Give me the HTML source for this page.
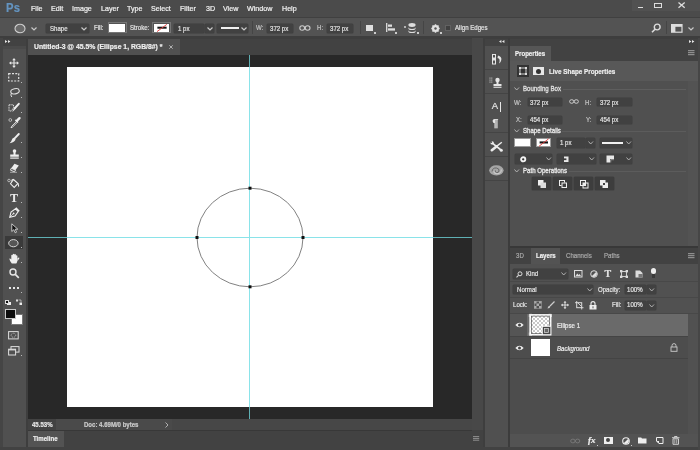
<!DOCTYPE html>
<html><head><meta charset="utf-8"><title>Photoshop</title>
<style>
*{margin:0;padding:0;box-sizing:border-box}
html,body{width:700px;height:450px;overflow:hidden;background:#535353}
body{position:relative;filter:blur(0.4px);font-family:"Liberation Sans",sans-serif;font-size:7px;color:#e4e4e4;line-height:1;-webkit-text-stroke:0.2px}
.a{position:absolute}
.t{position:absolute;white-space:nowrap;line-height:10px;height:10px;transform:scaleX(.87);transform-origin:0 50%}
.m{transform:scaleX(.95)}
.b{font-weight:bold}
.box{position:absolute;background:#414141;border-radius:1px;box-shadow:0 0 0 0.5px #3e3e3e}
svg{position:absolute;overflow:visible}
</style></head><body>

<!-- ===== menu bar ===== -->
<div class="a" id="menubar" style="left:0;top:0;width:700px;height:16.5px;background:#4b4b4b"></div>
<div class="t b" style="transform:scaleX(.9);left:6.3px;top:-0.3px;font-size:12.5px;line-height:17px;height:17px;color:#6494c0;letter-spacing:0.2px">Ps</div>
<div class="t m" style="left:31px;top:4.4px;font-size:7.5px;color:#f2f2f2;-webkit-text-stroke:0.2px">File</div>
<div class="t m" style="left:51px;top:4.4px;font-size:7.5px;color:#f2f2f2;-webkit-text-stroke:0.2px">Edit</div>
<div class="t m" style="left:72px;top:4.4px;font-size:7.5px;color:#f2f2f2;-webkit-text-stroke:0.2px">Image</div>
<div class="t m" style="left:101px;top:4.4px;font-size:7.5px;color:#f2f2f2;-webkit-text-stroke:0.2px">Layer</div>
<div class="t m" style="left:127px;top:4.4px;font-size:7.5px;color:#f2f2f2;-webkit-text-stroke:0.2px">Type</div>
<div class="t m" style="left:151px;top:4.4px;font-size:7.5px;color:#f2f2f2;-webkit-text-stroke:0.2px">Select</div>
<div class="t m" style="left:180px;top:4.4px;font-size:7.5px;color:#f2f2f2;-webkit-text-stroke:0.2px">Filter</div>
<div class="t m" style="left:206px;top:4.4px;font-size:7.5px;color:#f2f2f2;-webkit-text-stroke:0.2px">3D</div>
<div class="t m" style="left:223px;top:4.4px;font-size:7.5px;color:#f2f2f2;-webkit-text-stroke:0.2px">View</div>
<div class="t m" style="left:247px;top:4.4px;font-size:7.5px;color:#f2f2f2;-webkit-text-stroke:0.2px">Window</div>
<div class="t m" style="left:282px;top:4.4px;font-size:7.5px;color:#f2f2f2;-webkit-text-stroke:0.2px">Help</div>
<!-- window controls -->
<div class="a" style="left:632px;top:0;width:68px;height:11px;background:#515151"></div>
<div class="a" style="left:637.8px;top:6.6px;width:5.6px;height:1.4px;background:#ddd"></div>
<div class="a" style="left:654.4px;top:3.2px;width:7.2px;height:4.8px;border:1.2px solid #ddd;border-top-width:1.6px"></div>
<svg style="left:677.8px;top:2.3px" width="7.2" height="6.2"><path d="M0.5 0.500 L6.700 5.700 M6.700 0.500 L0.500 5.700" stroke="#ddd" stroke-width="1.3" fill="none"/></svg>

<!-- ===== options bar ===== -->
<div class="a" style="left:0;top:16.5px;width:700px;height:1.5px;background:#404040"></div>
<div class="a" id="optbar" style="left:0;top:18px;width:700px;height:18px;background:#535353"></div>
<div class="a" style="left:0;top:36px;width:700px;height:3px;background:#3e3e3e"></div>

<svg style="left:14px;top:23px" width="12" height="11"><ellipse cx="6" cy="5.5" rx="5" ry="4.3" fill="#6a6a6a" stroke="#cfcfcf" stroke-width="1.1"/></svg>
<svg style="left:31px;top:27px" width="6" height="4"><path d="M0.5 0.5 L3 3 L5.5 0.5" stroke="#c8c8c8" stroke-width="1.2" fill="none"/></svg>

<div class="box" style="left:46px;top:23.5px;width:43px;height:9.5px"></div>
<div class="t" style="left:50px;top:23.5px">Shape</div>
<svg style="left:81px;top:27px" width="6" height="4"><path d="M0.5 0.5 L3 3 L5.5 0.5" stroke="#c8c8c8" stroke-width="1.2" fill="none"/></svg>

<div class="t" style="left:94px;top:23px">Fill:</div>
<div class="a" style="left:107.5px;top:22.3px;width:19px;height:10.7px;border:0.8px solid #767676"></div><div class="a" style="left:109.3px;top:23.8px;width:15.4px;height:8px;background:#fff"></div>
<div class="t" style="left:130px;top:23px">Stroke:</div>
<div class="a" style="left:152.2px;top:22.3px;width:19px;height:10.7px;border:0.8px solid #767676"></div><div class="a" style="left:154.3px;top:23.8px;width:15.2px;height:8px;background:#fff"></div>
<svg style="left:154.3px;top:23.8px" width="15.2" height="8"><rect x="3.4" y="2.7" width="9.2" height="2" fill="#151515"/><path d="M3 7.6 L12.8 0.4" stroke="#e23a3a" stroke-width="0.9"/></svg>

<div class="box" style="left:174px;top:23.5px;width:30px;height:9.5px"></div>
<div class="t" style="left:178px;top:23.5px">1 px</div>
<div class="box" style="left:205px;top:23.5px;width:9px;height:9.5px"></div>
<svg style="left:207px;top:27px" width="6" height="4"><path d="M0.5 0.5 L3 3 L5.5 0.5" stroke="#c8c8c8" stroke-width="1.2" fill="none"/></svg>

<div class="box" style="left:217px;top:23.5px;width:31px;height:9.5px"></div>
<div class="a" style="left:220.5px;top:27px;width:18.5px;height:2px;background:#f0f0f0"></div>
<svg style="left:241px;top:27px" width="6" height="4"><path d="M0.5 0.5 L3 3 L5.5 0.5" stroke="#c8c8c8" stroke-width="1.2" fill="none"/></svg>

<div class="a" style="left:252px;top:21px;width:1px;height:13px;background:#454545"></div>
<div class="t" style="left:256px;top:23px;color:#c4c4c4">W:</div>
<div class="box" style="left:267px;top:23.5px;width:26px;height:9.5px"></div>
<div class="t" style="left:270px;top:23.5px">372 px</div>
<svg style="left:299px;top:25px" width="12" height="6"><ellipse cx="3.2" cy="3" rx="2.4" ry="2.2" fill="none" stroke="#ccc" stroke-width="1.1"/><ellipse cx="8.6" cy="3" rx="2.4" ry="2.2" fill="none" stroke="#ccc" stroke-width="1.1"/></svg>
<div class="t" style="left:317px;top:23px;color:#c4c4c4">H:</div>
<div class="box" style="left:327px;top:23.5px;width:26px;height:9.5px"></div>
<div class="t" style="left:330px;top:23.5px">372 px</div>
<div class="a" style="left:360px;top:21px;width:1px;height:13px;background:#454545"></div>

<!-- path ops icons -->
<div class="a" style="left:366px;top:25px;width:7px;height:6px;background:#e0e0e0"></div>
<div class="a" style="left:374px;top:32px;width:1.5px;height:1.5px;background:#ccc"></div>
<svg style="left:386px;top:23px" width="10" height="10"><path d="M0.7 0 V9" stroke="#ddd" stroke-width="1.3"/><rect x="2" y="1.5" width="4" height="2.3" fill="#ddd"/><rect x="2" y="5.3" width="7" height="2.3" fill="#ddd"/></svg>
<div class="a" style="left:395px;top:32px;width:1.5px;height:1.5px;background:#ccc"></div>
<svg style="left:404px;top:22px" width="14" height="12"><path d="M0 5 h2 M1 4 v2" stroke="#ddd" stroke-width="0.9"/><ellipse cx="8" cy="3" rx="3.6" ry="1.9" fill="#ddd"/><path d="M4.4 5 v1.2 a3.6 1.9 0 0 0 7.2 0 V5 a3.6 1.9 0 0 1 -7.2 0z" fill="#ddd"/><path d="M4.4 8 v1.2 a3.6 1.9 0 0 0 7.2 0 V8 a3.6 1.9 0 0 1 -7.2 0z" fill="#ddd"/></svg>
<div class="a" style="left:417px;top:32px;width:1.5px;height:1.5px;background:#ccc"></div>
<div class="a" style="left:423px;top:21px;width:1px;height:13px;background:#454545"></div>
<svg style="left:431px;top:24px" width="9" height="9" viewBox="-4.5 -4.5 9 9"><circle r="2.6" fill="none" stroke="#e0e0e0" stroke-width="1.9"/><g stroke="#e0e0e0" stroke-width="1.5"><path d="M0 -4.2V4.2M-4.2 0H4.2M-3 -3L3 3M3 -3L-3 3"/></g><circle r="1.2" fill="#535353"/></svg>
<div class="a" style="left:440px;top:32px;width:1.5px;height:1.5px;background:#ccc"></div>
<div class="a" style="left:445.4px;top:24.8px;width:6px;height:6px;border:0.8px solid #626262;background:#404040"></div>
<div class="t" style="left:455.3px;top:23.3px">Align Edges</div>

<svg style="left:651px;top:23px" width="11" height="10"><circle cx="6.2" cy="4" r="2.9" fill="none" stroke="#ddd" stroke-width="1.4"/><path d="M4 6.2 L1 9.2" stroke="#ddd" stroke-width="1.6"/></svg>
<div class="a" style="left:666px;top:21px;width:1px;height:13px;background:#454545"></div>
<svg style="left:671px;top:24px" width="12" height="9"><rect x="0.6" y="0.6" width="10.4" height="7.6" fill="none" stroke="#ddd" stroke-width="1.2"/><rect x="1" y="1" width="3.4" height="7" fill="#ddd"/><rect x="1" y="1" width="10" height="1.8" fill="#ddd"/></svg>
<svg style="left:688px;top:27px" width="6" height="4"><path d="M0.5 0.5 L3 3 L5.5 0.5" stroke="#c8c8c8" stroke-width="1.2" fill="none"/></svg>

<!-- ===== workspace background strips ===== -->
<div class="a" id="darkband" style="left:0;top:39px;width:700px;height:7px;background:#424242"></div>
<div class="a" style="left:0;top:38px;width:3px;height:412px;background:#454545"></div>

<!-- toolbar -->
<div class="a" id="toolbar" style="left:3px;top:46px;width:23px;height:401px;background:#505050"></div>
<div class="a" style="left:3px;top:46px;width:23px;height:3px;background:#4a4a4a"></div>
<div class="a" style="left:25.7px;top:38px;width:2px;height:409px;background:#3e3e3e"></div>
<svg style="left:5px;top:40.2px" width="6" height="3"><path d="M0 0L2.4 1.5L0 3ZM3 0L5.4 1.5L3 3Z" fill="#e8e8e8"/></svg>

<!-- doc tab bar -->
<div class="a" id="tabbar" style="left:28px;top:38.7px;width:444px;height:16px;background:#424242"></div>
<div class="a" id="doctab" style="left:27.5px;top:38.7px;width:152.5px;height:16px;background:#505050"></div>
<div class="t b" style="transform:scaleX(.975);left:33.8px;top:41.7px;font-size:7px;color:#eee">Untitled-3 @ 45.5% (Ellipse 1, RGB/8#) *</div>
<svg style="left:168.5px;top:44.7px" width="4" height="4"><path d="M0.3 0.3 L3.7 3.7 M3.7 0.3 L0.3 3.7" stroke="#bbb" stroke-width="0.9"/></svg>

<!-- canvas area -->
<div class="a" id="canvasbg" style="left:28px;top:55px;width:444px;height:364px;background:#282828"></div>
<div class="a" id="canvas" style="left:67px;top:67px;width:365.5px;height:339.5px;background:#fff"></div>
<div class="a" style="left:249.4px;top:54.7px;width:1.1px;height:364.3px;background:#5fb0b4"></div>
<div class="a" style="left:249.4px;top:67px;width:1.1px;height:339.5px;background:#8ae3e9"></div>
<div class="a" style="left:27.5px;top:236.8px;width:444.5px;height:1.1px;background:#5fb0b4"></div>
<div class="a" style="left:67px;top:236.8px;width:365.5px;height:1.1px;background:#8ae3e9"></div>
<svg style="left:190px;top:180px" width="120" height="115"><ellipse cx="60" cy="57.5" rx="53" ry="49.3" fill="none" stroke="#6a6a6a" stroke-width="0.85"/>
<rect x="58.5" y="6.7" width="3" height="3" fill="#111"/><rect x="58.5" y="105.3" width="3" height="3" fill="#111"/><rect x="5.5" y="56" width="3" height="3" fill="#111"/><rect x="111.5" y="56" width="3" height="3" fill="#111"/></svg>

<!-- status bar -->
<div class="a" id="status" style="left:28px;top:419px;width:444px;height:11px;background:#4a4a4a"></div>
<div class="a" style="left:28px;top:419px;width:28px;height:11px;background:#424242"></div>
<div class="a" style="left:172px;top:419.3px;width:300px;height:10.7px;background:#474747"></div>
<div class="t b" style="transform:scaleX(.93);left:32px;top:419.5px;font-size:6.5px">45.53%</div>
<div class="t b" style="transform:scaleX(.93);left:83.6px;top:419.5px;font-size:6.5px;color:#ccc">Doc: 4.69M/0 bytes</div>
<svg style="left:165px;top:422px" width="4" height="6"><path d="M0.5 0.5 L3 3 L0.5 5.5" stroke="#bbb" stroke-width="0.9" fill="none"/></svg>
<!-- timeline -->
<div class="a" style="left:28px;top:430px;width:444px;height:1px;background:#383838"></div>
<div class="a" id="timeline" style="left:28px;top:431px;width:444px;height:16px;background:#424242"></div>
<div class="a" style="left:28px;top:431px;width:36px;height:16px;background:#535353"></div>
<div class="t b" style="left:33px;top:434px;font-size:7px;color:#eee">Timeline</div>
<div class="a" style="left:0;top:447px;width:700px;height:3px;background:#424242"></div>

<!-- right strips -->
<div class="a" style="left:472px;top:38px;width:11px;height:409px;background:#484848"></div>
<div class="a" style="left:472px;top:430px;width:11px;height:17px;background:#424242"></div>
<svg style="left:472.5px;top:435.5px" width="7" height="5"><path d="M0 0.6H6.2M0 2.4H6.2M0 4.200H6.2" stroke="#999" stroke-width="0.9"/></svg>
<div class="a" style="left:483px;top:38px;width:1.5px;height:409px;background:#3e3e3e"></div>
<div class="a" id="iconstrip" style="left:484.5px;top:46px;width:23.5px;height:401px;background:#505050"></div>
<div class="a" style="left:508px;top:38px;width:2px;height:409px;background:#3c3c3c"></div>
<svg style="left:499.3px;top:40.2px" width="6" height="3"><path d="M2.4 0L0 1.5L2.4 3ZM5.4 0L3 1.5L5.4 3Z" fill="#e8e8e8"/></svg>
<svg style="left:689px;top:40.2px" width="6" height="3"><path d="M0 0L2.4 1.5L0 3ZM3 0L5.4 1.5L3 3Z" fill="#e8e8e8"/></svg>

<!-- ===== properties panel ===== -->
<div class="a" id="proptabs" style="left:510px;top:46px;width:190px;height:15px;background:#424242"></div>
<div class="a" style="left:510px;top:46px;width:41px;height:15px;background:#565656"></div>
<div class="t b" style="left:515px;top:49px;font-size:7px;color:#f0f0f0">Properties</div>
<svg style="left:688px;top:50px" width="7" height="6"><path d="M0 0.7H6.5M0 2.7H6.5M0 4.7H6.5" stroke="#aaa" stroke-width="0.9"/></svg>
<div class="a" id="propbody" style="left:510px;top:61px;width:190px;height:185px;background:#505050"></div>
<div class="a" style="left:688px;top:80px;width:9.5px;height:166px;background:#535353"></div>
<div class="a" style="left:510px;top:61px;width:190px;height:19.5px;background:#585858"></div>
<div class="a" style="left:516.5px;top:65px;width:12px;height:12px;background:#333"></div>
<svg style="left:516.5px;top:65px" width="12" height="12"><rect x="3" y="3" width="6" height="6" fill="none" stroke="#ddd" stroke-width="0.9"/><g fill="#ddd"><rect x="2" y="2" width="2" height="2"/><rect x="8" y="2" width="2" height="2"/><rect x="2" y="8" width="2" height="2"/><rect x="8" y="8" width="2" height="2"/></g></svg>
<div class="a" style="left:532.5px;top:67px;width:11px;height:8px;background:#e8e8e8"></div>
<div class="a" style="left:535.5px;top:68.5px;width:5px;height:5px;border-radius:50%;background:#333"></div>
<div class="t b" style="transform:scaleX(.9);left:548.5px;top:67px;font-size:7px;color:#eee">Live Shape Properties</div>

<svg style="left:514px;top:87px" width="6" height="4"><path d="M0.5 0.5 L2.7 3 L5 0.5" stroke="#bbb" stroke-width="0.9" fill="none"/></svg>
<div class="t" style="-webkit-text-stroke:0.35px;left:523px;top:84px;color:#ddd">Bounding Box</div>
<div class="a" style="left:563px;top:88.5px;width:123px;height:1px;background:#5e5e5e"></div>
<div class="a" style="left:562px;top:130.5px;width:124px;height:1px;background:#5c5c5c"></div>
<div class="a" style="left:569px;top:170.5px;width:117px;height:1px;background:#5c5c5c"></div>
<div class="t" style="left:513.5px;top:97.5px;color:#c4c4c4">W:</div>
<div class="box" style="left:527.5px;top:98.3px;width:34.5px;height:8px"></div>
<div class="t" style="left:530px;top:97.5px">372 px</div>
<svg style="left:568.7px;top:99.3px" width="11" height="6"><ellipse cx="2.7" cy="2.5" rx="2.1" ry="1.8" fill="none" stroke="#ccc" stroke-width="1"/><ellipse cx="7.3" cy="2.5" rx="2.1" ry="1.8" fill="none" stroke="#ccc" stroke-width="1"/></svg>
<div class="t" style="left:585px;top:97.5px;color:#c4c4c4">H:</div>
<div class="box" style="left:597px;top:98.3px;width:35px;height:8px"></div>
<div class="t" style="left:599.5px;top:97.5px">372 px</div>
<div class="t" style="left:516px;top:115px;color:#c4c4c4">X:</div>
<div class="box" style="left:527.5px;top:116px;width:34.5px;height:8px"></div>
<div class="t" style="left:530px;top:115px">454 px</div>
<div class="t" style="left:586px;top:115px;color:#c4c4c4">Y:</div>
<div class="box" style="left:597px;top:116px;width:35px;height:8px"></div>
<div class="t" style="left:599.5px;top:115px">454 px</div>

<svg style="left:514px;top:129px" width="6" height="4"><path d="M0.5 0.5 L2.7 3 L5 0.5" stroke="#bbb" stroke-width="0.9" fill="none"/></svg>
<div class="t" style="-webkit-text-stroke:0.35px;left:523px;top:126px">Shape Details</div>
<div class="a" style="left:514.2px;top:138.2px;width:16.4px;height:9.1px;background:#fff;border:0.6px solid #999"></div>
<div class="a" style="left:535.8px;top:138.2px;width:15.7px;height:9.1px;background:#fff;border:0.6px solid #999"></div>
<svg style="left:535.8px;top:138.2px" width="15.7" height="9.1"><rect x="3.6" y="3.4" width="8.4" height="2.1" fill="#151515"/><path d="M3 8.3 L12.6 0.8" stroke="#e23a3a" stroke-width="0.9"/></svg>
<div class="box" style="left:557px;top:138px;width:28px;height:9.5px"></div>
<div class="t" style="left:559.5px;top:137.5px">1 px</div>
<div class="box" style="left:586px;top:138px;width:8.5px;height:9.5px"></div>
<svg style="left:587.5px;top:141px" width="6" height="4"><path d="M0.5 0.5 L2.7 3 L5 0.5" stroke="#bbb" stroke-width="0.9" fill="none"/></svg>
<div class="box" style="left:599.5px;top:138px;width:32.5px;height:9.5px"></div>
<div class="a" style="left:602px;top:141.7px;width:21px;height:2px;background:#f0f0f0"></div>
<svg style="left:625.5px;top:141px" width="6" height="4"><path d="M0.5 0.5 L2.7 3 L5 0.5" stroke="#bbb" stroke-width="0.9" fill="none"/></svg>

<div class="box" style="left:514.5px;top:154px;width:37.5px;height:9.5px"></div>
<svg style="left:520px;top:155.7px" width="7" height="7"><circle cx="3.2" cy="3.3" r="2.1" fill="#333" stroke="#f2f2f2" stroke-width="1.9"/></svg>
<svg style="left:545.5px;top:157px" width="6" height="4"><path d="M0.5 0.5 L2.7 3 L5 0.5" stroke="#bbb" stroke-width="0.9" fill="none"/></svg>
<div class="box" style="left:557px;top:154px;width:38.5px;height:9.5px"></div>
<svg style="left:563px;top:155.5px" width="6" height="7"><path d="M1 0.5H5.5V6H1Z" fill="#e8e8e8"/><rect x="0" y="2.4" width="3.4" height="1.7" fill="#3c3c3c"/></svg>
<svg style="left:589px;top:157px" width="6" height="4"><path d="M0.5 0.5 L2.7 3 L5 0.5" stroke="#bbb" stroke-width="0.9" fill="none"/></svg>
<div class="box" style="left:600px;top:154px;width:32px;height:9.5px"></div>
<svg style="left:605.5px;top:155px" width="9" height="8"><path d="M0.5 0.5H8V4H4V7.5H0.5Z" fill="#e8e8e8"/><path d="M4.7 4.7H8M4.7 4.7V7.5" stroke="#bbb" stroke-width="0.7"/></svg>
<svg style="left:625.5px;top:157px" width="6" height="4"><path d="M0.5 0.5 L2.7 3 L5 0.5" stroke="#bbb" stroke-width="0.9" fill="none"/></svg>

<svg style="left:514px;top:169px" width="6" height="4"><path d="M0.5 0.5 L2.7 3 L5 0.5" stroke="#bbb" stroke-width="0.9" fill="none"/></svg>
<div class="t" style="-webkit-text-stroke:0.35px;left:523px;top:166px">Path Operations</div>
<div class="box" style="left:532px;top:177px;width:19px;height:13px;background:#3d3d3d"></div>
<div class="box" style="left:553px;top:177px;width:19px;height:13px;background:#3d3d3d"></div>
<div class="box" style="left:574px;top:177px;width:19px;height:13px;background:#3d3d3d"></div>
<div class="box" style="left:594.5px;top:177px;width:19px;height:13px;background:#3d3d3d"></div>
<svg style="left:537.5px;top:179.5px" width="9" height="9"><rect x="0" y="0" width="5.5" height="5.5" fill="#eee"/><rect x="2.5" y="2.5" width="5.5" height="5.5" fill="#ddd"/></svg>
<svg style="left:558.5px;top:179.5px" width="9" height="9"><rect x="0.5" y="0.5" width="5" height="5" fill="none" stroke="#eee" stroke-width="1"/><rect x="2.5" y="2.5" width="5.5" height="5.5" fill="#424242"/><rect x="3" y="3" width="4.5" height="4.5" fill="none" stroke="#eee" stroke-width="1"/></svg>
<svg style="left:579.5px;top:179.5px" width="9" height="9"><rect x="0.5" y="0.5" width="5" height="5" fill="none" stroke="#eee" stroke-width="1"/><rect x="3" y="3" width="5" height="5" fill="none" stroke="#eee" stroke-width="1"/><rect x="3" y="3" width="2.5" height="2.5" fill="#eee"/></svg>
<svg style="left:600px;top:179.5px" width="9" height="9"><rect x="0" y="0" width="5.5" height="5.5" fill="#eee"/><rect x="2.5" y="2.5" width="5.5" height="5.5" fill="#eee"/><rect x="3" y="3" width="2" height="2" fill="#424242"/></svg>

<div class="a" style="left:510px;top:246px;width:190px;height:1.5px;background:#383838"></div>

<!-- ===== layers panel ===== -->
<div class="a" id="laytabs" style="left:510px;top:247.5px;width:190px;height:16px;background:#424242"></div>
<div class="a" style="left:531px;top:247.5px;width:28.5px;height:16px;background:#535353"></div>
<div class="t" style="left:516px;top:250.5px;color:#aaa">3D</div>
<div class="t b" style="left:536px;top:250.5px;color:#f0f0f0">Layers</div>
<div class="t" style="left:566px;top:250.5px;color:#aaa">Channels</div>
<div class="t" style="left:604px;top:250.5px;color:#aaa">Paths</div>
<svg style="left:688px;top:252.5px" width="7" height="6"><path d="M0 0.7H6.5M0 2.7H6.5M0 4.7H6.5" stroke="#aaa" stroke-width="0.9"/></svg>
<div class="a" id="laybody" style="left:510px;top:263.5px;width:190px;height:183.5px;background:#515151"></div>

<div class="box" style="left:512.5px;top:269px;width:55px;height:9.5px"></div>
<svg style="left:516px;top:270.5px" width="7" height="7"><circle cx="4" cy="2.8" r="2" fill="none" stroke="#ddd" stroke-width="1"/><path d="M2.5 4.3 L0.5 6.3" stroke="#ddd" stroke-width="1.1"/></svg>
<div class="t" style="left:525.5px;top:268.5px">Kind</div>
<svg style="left:561px;top:272px" width="6" height="4"><path d="M0.5 0.5 L2.7 3 L5 0.5" stroke="#bbb" stroke-width="0.9" fill="none"/></svg>
<svg style="left:574px;top:270px" width="9" height="8"><rect x="0.5" y="0.5" width="7.5" height="6.5" fill="none" stroke="#ddd" stroke-width="1"/><path d="M1.5 6 L3.3 3.5 L4.6 5 L5.6 4 L7 6Z" fill="#ddd"/></svg>
<svg style="left:589.5px;top:269.5px" width="8" height="8"><circle cx="4" cy="4" r="3.3" fill="none" stroke="#ddd" stroke-width="1"/><path d="M1.7 6.3 A3.3 3.3 0 0 0 6.3 1.7Z" fill="#ddd"/></svg>
<div class="t b" style="transform:none;left:604.5px;top:267.5px;font-family:'Liberation Serif',serif;font-size:10px;line-height:11px;height:11px;color:#e4e4e4">T</div>
<svg style="left:619.5px;top:269.5px" width="8" height="8"><rect x="1.5" y="1.5" width="5" height="5" fill="none" stroke="#ddd" stroke-width="0.9"/><g fill="#ddd"><rect x="0" y="0" width="2.4" height="2.4"/><rect x="5.6" y="0" width="2.4" height="2.4"/><rect x="0" y="5.6" width="2.4" height="2.4"/><rect x="5.6" y="5.6" width="2.4" height="2.4"/></g></svg>
<svg style="left:635px;top:269.5px" width="8" height="8"><path d="M0.5 0.5H5L7.5 3V7.5H0.5Z" fill="#ddd"/><rect x="3.5" y="4" width="4" height="3.5" fill="#777"/></svg>
<div class="a" style="left:650.5px;top:268px;width:5.5px;height:5.5px;border-radius:50%;background:#eee"></div>
<div class="a" style="left:651.5px;top:273.5px;width:3.5px;height:4px;background:#3a3a3a"></div>

<div class="a" style="left:510px;top:281px;width:190px;height:1px;background:#484848"></div>
<div class="box" style="left:513px;top:285px;width:80px;height:9px"></div>
<div class="t" style="left:517px;top:284.5px">Normal</div>
<svg style="left:587px;top:288px" width="6" height="4"><path d="M0.5 0.5 L2.7 3 L5 0.5" stroke="#bbb" stroke-width="0.9" fill="none"/></svg>
<div class="t" style="left:598px;top:284.5px">Opacity:</div>
<div class="box" style="left:624.5px;top:285px;width:21px;height:9px"></div>
<div class="t" style="left:626.5px;top:284.5px">100%</div>
<div class="box" style="left:647px;top:285px;width:8.5px;height:9px"></div>
<svg style="left:648.5px;top:288px" width="6" height="4"><path d="M0.5 0.5 L2.7 3 L5 0.5" stroke="#bbb" stroke-width="0.9" fill="none"/></svg>

<div class="a" style="left:510px;top:297px;width:190px;height:1px;background:#484848"></div>
<div class="t" style="left:513px;top:300px">Lock:</div>
<svg style="left:533.5px;top:301px" width="8" height="8"><g fill="#aaa"><rect x="0" y="0" width="2.5" height="2.5"/><rect x="5" y="0" width="2.5" height="2.5"/><rect x="2.5" y="2.5" width="2.5" height="2.5"/><rect x="0" y="5" width="2.5" height="2.5"/><rect x="5" y="5" width="2.5" height="2.5"/></g><rect x="0.3" y="0.3" width="7" height="7" fill="none" stroke="#999" stroke-width="0.6"/></svg>
<svg style="left:547px;top:301px" width="8" height="8"><path d="M7.5 0.5 L3 5" stroke="#ccc" stroke-width="1.2"/><path d="M0.5 7.5 Q1 5 2.5 4.8 L3.4 5.7 Q3 7.3 0.5 7.5Z" fill="#ccc"/></svg>
<svg style="left:560.5px;top:301px" width="8" height="8"><path d="M4 0.5V7.5M0.5 4H7.5" stroke="#ddd" stroke-width="1"/><path d="M4 0 L5.5 1.8H2.5Z M4 8 L5.5 6.2H2.5Z M0 4 L1.8 2.5V5.5Z M8 4 L6.2 2.5V5.5Z" fill="#ddd"/></svg>
<svg style="left:575px;top:301px" width="8" height="8"><rect x="1.7" y="1.7" width="5" height="5" fill="none" stroke="#ddd" stroke-width="1"/><path d="M0 1.7H2M1.7 0V2M6 6.7H8.5M6.7 6V8.5" stroke="#ddd" stroke-width="0.9"/><path d="M3 2 L6.5 5.5" stroke="#ddd" stroke-width="0.9"/></svg>
<svg style="left:589px;top:300.5px" width="8" height="9"><path d="M2 4V2.6A2 2 0 0 1 6 2.6V4" fill="none" stroke="#eee" stroke-width="1.1"/><rect x="0.5" y="4" width="7" height="4.5" fill="#eee"/><rect x="3.5" y="5.3" width="1" height="2" fill="#555"/></svg>
<div class="t" style="left:612px;top:300px">Fill:</div>
<div class="box" style="left:624.5px;top:300.5px;width:21px;height:9px"></div>
<div class="t" style="left:626.5px;top:300px">100%</div>
<div class="box" style="left:647px;top:300.5px;width:8.5px;height:9px"></div>
<svg style="left:648.5px;top:303.5px" width="6" height="4"><path d="M0.5 0.5 L2.7 3 L5 0.5" stroke="#bbb" stroke-width="0.9" fill="none"/></svg>

<div class="a" style="left:510px;top:313px;width:190px;height:1px;background:#484848"></div>
<!-- layer list -->
<div class="a" id="laylist" style="left:510px;top:314px;width:178px;height:120px;background:#4d4d4d"></div>
<div class="a" style="left:510px;top:314px;width:178px;height:22px;background:#6a6a6a"></div>
<div class="a" style="left:510px;top:314px;width:17px;height:22px;background:#555"></div>
<div class="a" style="left:510px;top:336px;width:178px;height:1px;background:#444"></div>
<div class="a" style="left:510px;top:358px;width:178px;height:1px;background:#444"></div>
<svg style="left:514.5px;top:322px" width="9" height="6"><path d="M0.3 3 Q4.5 -1.5 8.7 3 Q4.5 7.5 0.3 3Z" fill="#eee"/><circle cx="4.5" cy="3" r="1.5" fill="#444"/></svg>
<svg style="left:514.5px;top:345px" width="9" height="6"><path d="M0.3 3 Q4.5 -1.5 8.7 3 Q4.5 7.5 0.3 3Z" fill="#eee"/><circle cx="4.5" cy="3" r="1.5" fill="#444"/></svg>
<svg style="left:529px;top:314px" width="23" height="22"><defs><pattern id="ck" width="4" height="4" patternUnits="userSpaceOnUse"><rect width="4" height="4" fill="#fff"/><rect width="2" height="2" fill="#c8c8c8"/><rect x="2" y="2" width="2" height="2" fill="#c8c8c8"/></pattern></defs>
<rect x="1" y="0.800" width="20.800" height="20" fill="url(#ck)" stroke="#fff" stroke-width="1.300"/><rect x="2.300" y="2.100" width="18.200" height="17.400" fill="none" stroke="#444" stroke-width="0.600"/>
<path d="M0.300 3V0.300H3M19.500 0.300H22.500V3M0.300 18.500V21.300H3" stroke="#eee" stroke-width="0.700" fill="none"/>
<rect x="12.800" y="11.800" width="9" height="8.800" fill="#fff"/><rect x="13.800" y="12.800" width="7.600" height="7.400" fill="#444"/><rect x="15.600" y="14.600" width="4" height="3.800" fill="#666" stroke="#ddd" stroke-width="0.700"/></svg>
<div class="t" style="left:557px;top:320.5px;color:#eee">Ellipse 1</div>
<div class="a" style="left:531px;top:338.5px;width:19px;height:17.5px;background:#fff"></div>
<div class="t" style="left:557px;top:343.5px;font-style:italic;color:#eee">Background</div>
<svg style="left:670px;top:343px" width="8" height="9"><path d="M2 4V2.6A2 2 0 0 1 6 2.6V4" fill="none" stroke="#ccc" stroke-width="0.9"/><rect x="1" y="4" width="6" height="4.3" fill="none" stroke="#ccc" stroke-width="0.9"/></svg>

<!-- layers bottom bar -->
<div class="a" style="left:510px;top:434px;width:190px;height:13px;background:#535353"></div>
<svg style="left:570px;top:438px" width="11" height="6"><ellipse cx="2.9" cy="3" rx="2.2" ry="1.9" fill="none" stroke="#777" stroke-width="1"/><ellipse cx="7.6" cy="3" rx="2.2" ry="1.9" fill="none" stroke="#777" stroke-width="1"/></svg>
<div class="t" style="transform:none;left:588px;top:435px;font-family:'Liberation Serif',serif;font-style:italic;font-weight:bold;font-size:9px;color:#eee">fx</div>
<div class="a" style="left:597px;top:445px;width:1.3px;height:1.3px;background:#ccc"></div>
<div class="a" style="left:604px;top:437px;width:8.5px;height:6.5px;background:#eee"></div>
<div class="a" style="left:606.2px;top:438.2px;width:4px;height:4px;border-radius:50%;background:#444"></div>
<svg style="left:621.5px;top:436.5px" width="8" height="8"><circle cx="4" cy="4" r="3.3" fill="none" stroke="#eee" stroke-width="1.1"/><path d="M1.7 6.3 A3.3 3.3 0 0 0 6.3 1.7Z" fill="#eee"/></svg>
<div class="a" style="left:630.5px;top:445px;width:1.3px;height:1.3px;background:#ccc"></div>
<svg style="left:638px;top:437px" width="9" height="7"><path d="M0 0.5H3.2L4 1.5H8.5V6.5H0Z" fill="#eee"/></svg>
<svg style="left:655.5px;top:437px" width="8" height="7"><path d="M0.5 0.5H7V6.5H3L0.5 4Z" fill="none" stroke="#eee" stroke-width="1"/><path d="M0.5 4H3V6.5Z" fill="#eee"/></svg>
<svg style="left:672px;top:436px" width="8" height="9"><path d="M0 1.7H7.5M2.5 1.5V0.5H5V1.5" stroke="#ddd" stroke-width="0.9" fill="none"/><path d="M1 2.8H6.5V8.3H1Z" fill="none" stroke="#ddd" stroke-width="0.9"/><path d="M2.8 3.5V7.5M4.7 3.5V7.5" stroke="#ddd" stroke-width="0.7"/></svg>

<!-- TOOLS -->
<div class="a" style="left:697.5px;top:38px;width:2.5px;height:412px;background:#464646"></div>
<!--TOOLS-START-->
<!-- selected tool bg -->
<div class="a" style="left:4.5px;top:236px;width:18.5px;height:13px;background:#3a3a3a"></div>
<!-- move -->
<svg style="left:8.5px;top:57.5px" width="10" height="10" viewBox="0 0 10 10"><path d="M5 1V9M1 5H9" stroke="#e6e6e6" stroke-width="1.1"/><path d="M5 0L6.8 2.2H3.2ZM5 10L6.8 7.800H3.2ZM0 5L2.2 3.200V6.800ZM10 5L7.800 3.200V6.800Z" fill="#e6e6e6"/></svg>
<!-- marquee -->
<svg style="left:8px;top:72.5px" width="12" height="9"><rect x="0.7" y="0.7" width="10" height="7.3" fill="none" stroke="#e0e0e0" stroke-width="1.2" stroke-dasharray="2 1.3"/></svg>
<div class="a" style="left:20.5px;top:81.5px;width:1.3px;height:1.3px;background:#bbb"></div>
<!-- lasso -->
<svg style="left:9px;top:87.500px" width="11" height="10"><ellipse cx="6" cy="3.300" rx="4.300" ry="2.600" fill="none" stroke="#e0e0e0" stroke-width="1.1" transform="rotate(-12 6 3.3)"/><path d="M2.500 5 Q1 7 2.800 9" stroke="#e0e0e0" stroke-width="1" fill="none"/></svg>
<div class="a" style="left:20.5px;top:96.5px;width:1.3px;height:1.3px;background:#bbb"></div>
<!-- quick select -->
<svg style="left:8px;top:102.500px" width="12" height="10"><path d="M1 1.800 H5.500 V4.500 L3.500 8 H1Z" fill="none" stroke="#d8d8d8" stroke-width="1" stroke-dasharray="1.500 0.800"/><path d="M10.800 0.800 L7 5" stroke="#eee" stroke-width="2" stroke-linecap="round"/><path d="M6.200 4.300 L7.800 5.800 L4.300 9Z" fill="#eee"/></svg>
<div class="a" style="left:20.5px;top:111.5px;width:1.3px;height:1.3px;background:#bbb"></div>
<!-- eyedropper -->
<svg style="left:7.500px;top:117px" width="13" height="12"><circle cx="2.300" cy="3" r="1.400" fill="none" stroke="#ccc" stroke-width="0.8"/><path d="M11.500 1.200 L8.800 3.800" stroke="#eee" stroke-width="2.400" stroke-linecap="round"/><path d="M7.300 2.800 L10 5.500" stroke="#eee" stroke-width="1.200"/><path d="M8.300 4.600 L3.800 9.200 L3 10.800 L4.600 10 L9.200 5.500" fill="none" stroke="#eee" stroke-width="0.9"/></svg>
<!-- brush -->
<svg style="left:9px;top:132.500px" width="11" height="11"><path d="M9.8 1 L5.6 5.4" stroke="#eee" stroke-width="1.9" stroke-linecap="round"/><path d="M4.8 4.8 L6.6 6.6 Q5 9.800 0.600 10.200 Q2.500 8.500 2.800 7 Q3.200 5.300 4.800 4.800Z" fill="#eee"/></svg>
<div class="a" style="left:20.5px;top:141.5px;width:1.3px;height:1.3px;background:#bbb"></div>
<!-- stamp -->
<svg style="left:9px;top:148.500px" width="11" height="10"><circle cx="5.500" cy="2" r="1.800" fill="#eee"/><path d="M4.500 3 H6.500 V5.500 H9.800 V7.800 H1.200 V5.500 H4.500Z" fill="#eee"/><rect x="1.200" y="8.500" width="8.600" height="1.200" fill="#eee"/></svg>
<div class="a" style="left:20.5px;top:156.5px;width:1.3px;height:1.3px;background:#bbb"></div>
<!-- eraser -->
<svg style="left:9px;top:163px" width="11" height="10"><path d="M5.500 0.800 L9.800 2.500 L6.500 7 L2.200 5.300Z" fill="#eee"/><path d="M2.200 5.300 L6.500 7 L5.500 8.800 L1.500 7.200Z" fill="none" stroke="#eee" stroke-width="0.9"/><path d="M1 9.300 H8" stroke="#ccc" stroke-width="0.7"/></svg>
<div class="a" style="left:20.5px;top:171.5px;width:1.3px;height:1.3px;background:#bbb"></div>
<!-- bucket -->
<svg style="left:7px;top:177.500px" width="14" height="11"><circle cx="2" cy="2.500" r="1.300" fill="none" stroke="#ccc" stroke-width="0.8"/><path d="M6.500 1.500 L11 5.500 L7.200 9.500 L3.500 5.800Z" fill="none" stroke="#eee" stroke-width="1.100"/><path d="M11 5 Q13 7.500 12 9.300 Q10.500 8.500 11 5Z" fill="#eee"/><path d="M6.500 1.500 Q4.500 0.500 4.500 3.500" stroke="#eee" stroke-width="0.8" fill="none"/></svg>
<!-- T -->
<div class="t b" style="transform:none;left:10.3px;top:191.5px;font-family:'Liberation Serif',serif;font-size:11.5px;line-height:13px;height:13px;color:#ececec">T</div>
<div class="a" style="left:20.5px;top:201.5px;width:1.3px;height:1.3px;background:#bbb"></div>
<!-- pen -->
<svg style="left:8.500px;top:207px" width="11" height="11"><path d="M0.800 10.200 L2 5 L6.500 1.800 L9.200 4.500 L6 9 Z" fill="none" stroke="#eee" stroke-width="1.100"/><path d="M6.800 0.800 L10.200 4.200" stroke="#eee" stroke-width="1.500"/><circle cx="4.600" cy="6.400" r="0.900" fill="#eee"/><path d="M0.800 10.200 L4.300 6.700" stroke="#eee" stroke-width="0.700"/></svg>
<div class="a" style="left:20.5px;top:216.5px;width:1.3px;height:1.3px;background:#bbb"></div>
<!-- arrow -->
<svg style="left:10.500px;top:223px" width="8" height="11"><path d="M0.800 0.800 V8.500 L2.800 6.700 L4.200 9.800 L5.500 9.200 L4.200 6.200 H6.800Z" fill="#111" stroke="#e8e8e8" stroke-width="0.800"/></svg>
<div class="a" style="left:20.5px;top:232px;width:1.3px;height:1.3px;background:#bbb"></div>
<!-- ellipse tool -->
<svg style="left:8px;top:238.500px" width="11" height="9"><ellipse cx="5.400" cy="4.200" rx="4.700" ry="3.600" fill="#555" stroke="#d8d8d8" stroke-width="1"/></svg>
<div class="a" style="left:20.5px;top:246.5px;width:1.3px;height:1.3px;background:#bbb"></div>
<!-- hand -->
<svg style="left:8.500px;top:252.500px" width="12" height="11"><path d="M2.800 10.500 Q0.500 7.500 0.300 5.800 Q1 5 2.300 6.500 V2.300 Q3 1.300 3.700 2.300 V1.200 Q4.500 0.200 5.300 1.200 V1.500 Q6.100 0.600 6.900 1.600 V2.500 Q7.700 1.800 8.400 2.800 V7.500 Q8.200 9.500 7.300 10.500Z" fill="#eee"/><path d="M8.400 5.500 Q10 4 10.500 5 Q9.500 7 8.400 8Z" fill="#eee"/></svg>
<div class="a" style="left:20.5px;top:261.5px;width:1.3px;height:1.3px;background:#bbb"></div>
<!-- zoom -->
<svg style="left:8.500px;top:267.500px" width="11" height="11"><circle cx="4" cy="4" r="3" fill="none" stroke="#e6e6e6" stroke-width="1.400"/><path d="M6.300 6.300 L9.800 9.800" stroke="#e6e6e6" stroke-width="1.700"/></svg>
<!-- dots -->
<div class="a" style="left:9px;top:287px;width:2.200px;height:2.200px;background:#e6e6e6"></div>
<div class="a" style="left:12.800px;top:287px;width:2.200px;height:2.200px;background:#e6e6e6"></div>
<div class="a" style="left:16.600px;top:287px;width:2.200px;height:2.200px;background:#e6e6e6"></div>
<div class="a" style="left:20.5px;top:292px;width:1.3px;height:1.3px;background:#bbb"></div>
<!-- default / swap -->
<div class="a" style="left:6.800px;top:301.500px;width:4px;height:3.500px;background:#eee"></div>
<div class="a" style="left:4.500px;top:299.500px;width:4.500px;height:4px;background:#111;border:0.800px solid #ddd"></div>
<svg style="left:16px;top:299px" width="7" height="7"><rect x="0" y="0.500" width="2" height="2" fill="#ddd"/><rect x="3.500" y="3.500" width="2.500" height="2.500" fill="#eee"/><path d="M2.500 1 H5 V3" stroke="#ccc" stroke-width="0.700" fill="none"/></svg>
<!-- fg/bg -->
<div class="a" style="left:11.3px;top:313.8px;width:12px;height:11.2px;background:#fff;border:0.5px solid #777"></div>
<div class="a" style="left:4.500px;top:308.500px;width:11.500px;height:10.500px;background:#0c0c0c;border:1px solid #c8c8c8"></div>
<!-- quick mask -->
<svg style="left:8px;top:331px" width="11" height="9"><rect x="0.600" y="0.600" width="9.600" height="7.300" fill="none" stroke="#ddd" stroke-width="1"/><ellipse cx="5.400" cy="4.250" rx="2.300" ry="2" fill="none" stroke="#ccc" stroke-width="0.800" stroke-dasharray="1 0.700"/></svg>
<!-- screen mode -->
<svg style="left:8px;top:345.500px" width="12" height="10"><rect x="3" y="0.600" width="8" height="5.500" fill="none" stroke="#ddd" stroke-width="1"/><rect x="0.600" y="3.200" width="7" height="5.800" fill="#505050" stroke="#ddd" stroke-width="1"/><rect x="0.600" y="3.200" width="7" height="1.200" fill="#ddd"/></svg>
<div class="a" style="left:20.5px;top:354.5px;width:1.3px;height:1.3px;background:#bbb"></div>

<!-- right icon strip -->
<div class="a" style="left:484.500px;top:69px;width:23.500px;height:1px;background:#444"></div>
<div class="a" style="left:484.500px;top:93px;width:23.500px;height:1px;background:#444"></div>
<div class="a" style="left:484.500px;top:132px;width:23.500px;height:1px;background:#444"></div>
<div class="a" style="left:484.500px;top:156px;width:23.500px;height:1px;background:#444"></div>
<div class="a" style="left:484.500px;top:180px;width:23.500px;height:1px;background:#444"></div>
<!-- history -->
<svg style="left:491.500px;top:53.500px" width="11" height="11"><rect x="0.500" y="0.500" width="3" height="9.500" fill="none" stroke="#e6e6e6" stroke-width="1"/><rect x="0.500" y="3.500" width="3" height="3" fill="#e6e6e6"/><path d="M6 1.500 Q10 2.500 9.300 6 Q9 8 7 9.500 Q8 7 7.500 5.500 Q7 4 5.500 4Z" fill="#e6e6e6"/></svg>
<!-- clone source -->
<svg style="left:489px;top:76.500px" width="13" height="11"><path d="M1 0.500V6M2.800 0.500V6" stroke="#ccc" stroke-width="0.900" stroke-dasharray="1.200 0.800"/><circle cx="8.500" cy="3" r="2.200" fill="#e6e6e6"/><path d="M7.500 4.500H9.500V7H12.500V9H4.500V7H7.500Z" fill="#e6e6e6"/><rect x="4.500" y="9.700" width="8" height="1.100" fill="#e6e6e6"/></svg>
<!-- A| -->
<div class="t" style="transform:none;left:491.7px;top:100.3px;font-size:9.5px;line-height:12px;height:12px;color:#e6e6e6">A</div>
<div class="a" style="left:500px;top:102px;width:1px;height:9.500px;background:#e6e6e6"></div>
<!-- pilcrow -->
<div class="t b" style="transform:none;left:492.500px;top:116.500px;font-size:10.500px;line-height:12px;height:12px;color:#e6e6e6">¶</div>
<!-- tools -->
<svg style="left:489.800px;top:141.300px" width="13" height="11"><path d="M2 1.800 L11 9" stroke="#ececec" stroke-width="1.700"/><path d="M11.800 1.200 L6.500 5.400" stroke="#ececec" stroke-width="1.400"/><path d="M6.500 5.400 L1.800 9.200" stroke="#ececec" stroke-width="2.600" stroke-linecap="round"/><circle cx="2.200" cy="1.900" r="1.700" fill="#ececec"/><circle cx="1.300" cy="1.100" r="0.900" fill="#505050"/><circle cx="11.300" cy="9.200" r="1.500" fill="#ececec"/></svg>
<!-- CC -->
<svg style="left:488.800px;top:165px" width="15" height="11"><ellipse cx="7.400" cy="5.300" rx="7.200" ry="5.100" fill="#a6a6a6"/><path d="M3 6.500 Q3.500 2.500 7.500 3 Q10.500 3.500 10 6 Q9.500 8 7.500 7.500 Q6 7 6.500 5.500" fill="none" stroke="#606060" stroke-width="0.900"/><path d="M12.300 4.500 Q12.500 8.500 8 8.800 Q4.500 8.800 4.800 6.200" fill="none" stroke="#d8d8d8" stroke-width="0.800"/></svg>
<!--TOOLS-END-->
</body></html>
